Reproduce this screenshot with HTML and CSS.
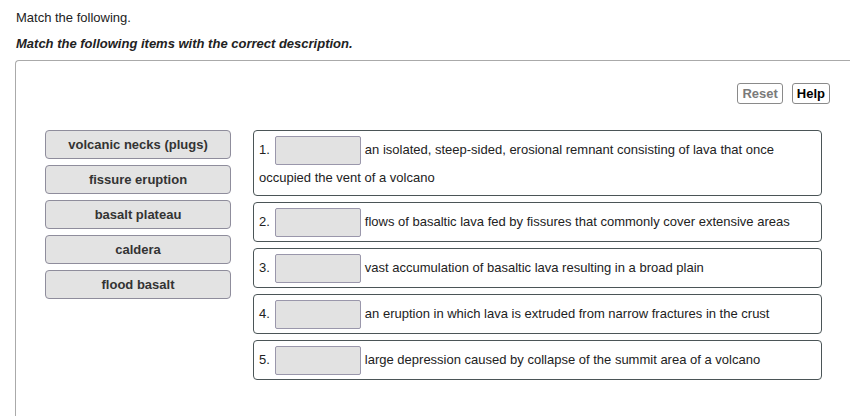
FILE: index.html
```html
<!DOCTYPE html>
<html>
<head>
<meta charset="utf-8">
<link rel="stylesheet" href="styles.css">
</head>
<body>
<p class="intro">Match the following.</p>
<p class="instr">Match the following items with the correct description.</p>
<div class="panel">
  <div class="toolbar">
    <button class="btn btn-reset">Reset</button>
    <button class="btn btn-help">Help</button>
  </div>
  <div class="match">
    <div class="items">
      <div class="item">volcanic necks (plugs)</div>
      <div class="item">fissure eruption</div>
      <div class="item">basalt plateau</div>
      <div class="item">caldera</div>
      <div class="item">flood basalt</div>
    </div>
    <div class="rows">
      <div class="row"><span class="num">1.</span><span class="slot"></span>an isolated, steep-sided, erosional remnant consisting of lava that once occupied the vent of a volcano</div>
      <div class="row"><span class="num">2.</span><span class="slot"></span>flows of basaltic lava fed by fissures that commonly cover extensive areas</div>
      <div class="row"><span class="num">3.</span><span class="slot"></span>vast accumulation of basaltic lava resulting in a broad plain</div>
      <div class="row"><span class="num">4.</span><span class="slot"></span>an eruption in which lava is extruded from narrow fractures in the crust</div>
      <div class="row"><span class="num">5.</span><span class="slot"></span>large depression caused by collapse of the summit area of a volcano</div>
    </div>
  </div>
</div>
</body>
</html>
```
FILE: styles.css
```css
html, body {
  overflow: hidden;
}
body {
  margin: 0;
  padding: 0 0 0 16px;
  font-family: "Liberation Sans", Arial, Helvetica, sans-serif;
  font-size: 13px;
  color: #222;
  background: #fff;
}
.intro {
  margin: 0;
  padding-top: 10px;
  line-height: 16px;
}
.instr {
  margin: 10px 0 0 0;
  line-height: 16px;
  font-weight: bold;
  font-style: italic;
}
.panel {
  margin-top: 8px;
  margin-left: -1px;
  width: 835px;
  height: 356px;
  border-top: 1px solid #aaaaaa;
  border-left: 1px solid #aaaaaa;
  border-top-left-radius: 4px;
  box-sizing: border-box;
}
.toolbar {
  width: 814px;
  display: flex;
  justify-content: flex-end;
  gap: 9px;
  padding-top: 22px;
}
.btn {
  font-family: "Liberation Sans", Arial, Helvetica, sans-serif;
  font-size: 13px;
  font-weight: bold;
  height: 21px;
  padding: 1px 4px 0 4px;
  margin: 0;
  line-height: 18px;
  background: #fff;
  border: 1px solid #8a8a8a;
  border-radius: 3px;
}
.btn-reset {
  color: #7a7a7a;
}
.btn-help {
  color: #000;
}
.match {
  display: flex;
  gap: 22px;
  padding-left: 29px;
  margin-top: 26px;
}
.items {
  width: 186px;
  display: flex;
  flex-direction: column;
  gap: 6px;
}
.item {
  height: 29px;
  box-sizing: border-box;
  border: 1px solid #8f8d9c;
  border-radius: 4px;
  background: #e3e3e3;
  font-weight: bold;
  color: #333;
  text-align: center;
  line-height: 28px;
}
.rows {
  width: 569px;
  display: flex;
  flex-direction: column;
  gap: 6px;
}
.row {
  box-sizing: border-box;
  border: 1px solid #4b5557;
  border-radius: 4px;
  padding: 5px 5px 4px 5px;
  line-height: 26px;
  color: #222;
}
.num {
  display: inline-block;
  margin-right: 5px;
}
.slot {
  display: inline-block;
  width: 86px;
  height: 29px;
  box-sizing: border-box;
  margin: 0 4px 0 0;
  vertical-align: middle;
  background: #e2e2e2;
  border: 1px solid #9a97ab;
  border-radius: 2px;
}
```
